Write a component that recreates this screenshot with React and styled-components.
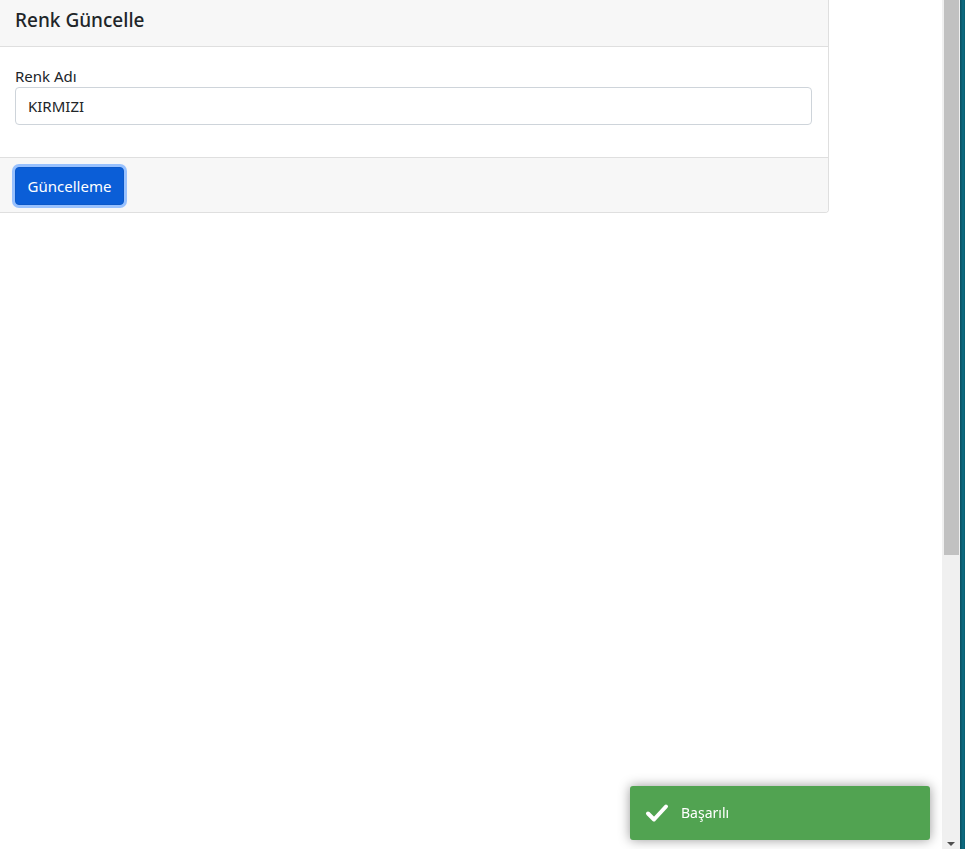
import styled, { createGlobalStyle } from "styled-components"

const GlobalStyle = createGlobalStyle`
  html, body {
    margin: 0;
    padding: 0;
    height: 100%;
    overflow: hidden;
    background: #fff;
  }
  body {
    font-family: "Noto Sans", "Open Sans", sans-serif;
    color: #212529;
  }
`

export default function App() {
  return (
    <>
      <GlobalStyle />
      <Screen>
        <Main>
          <Card>
            <CardHeader>
              <h5>Renk Güncelle</h5>
            </CardHeader>
            <CardBody>
              <Label htmlFor="renk">Renk Adı</Label>
              <Input id="renk" defaultValue="KIRMIZI" />
            </CardBody>
            <CardFooter>
              <Button>Güncelleme</Button>
            </CardFooter>
          </Card>
        </Main>
        <Scrollbar>
          <Thumb />
          <Arrow />
        </Scrollbar>
        <Edge />
      </Screen>
      <Toast>
        <svg width="24" height="20" viewBox="0 0 24 20">
          <path d="M3 10.5 L9 16.5 L21 3.5" fill="none" stroke="#fff" strokeWidth="4" strokeLinecap="round" strokeLinejoin="round" />
        </svg>
        <span>Başarılı</span>
      </Toast>
    </>
  )
}

const Screen = styled.div`
  display: flex;
  height: 849px;
  width: 965px;
`

const Main = styled.div`
  width: 942px;
  flex-shrink: 0;
`

const Card = styled.div`
  width: 829px;
  box-sizing: border-box;
  border-right: 1px solid #dfdfdf;
  border-bottom: 1px solid #dfdfdf;
  border-bottom-right-radius: 4px;
  overflow: hidden;
`

const CardHeader = styled.div`
  height: 47px;
  box-sizing: border-box;
  padding: 0 15px;
  display: flex;
  align-items: center;
  background: #f7f7f7;
  border-bottom: 1px solid #dfdfdf;

  h5 {
    margin: 0;
    margin-top: -7px;
    font-size: 19px;
    font-weight: 500;
    color: #212529;
  }
`

const CardBody = styled.div`
  padding: 19px 16px 32px 15px;
  height: 110px;
  box-sizing: border-box;
`

const Label = styled.label`
  display: block;
  font-size: 15px;
  line-height: 20px;
  margin-bottom: 1px;
  color: #212529;
`

const Input = styled.input`
  display: block;
  width: 797px;
  height: 38px;
  box-sizing: border-box;
  padding: 0 12px;
  font-family: inherit;
  font-size: 15px;
  color: #212529;
  border: 1px solid #ced4da;
  border-radius: 4px;
  outline: none;
`

const CardFooter = styled.div`
  height: 55px;
  box-sizing: border-box;
  padding: 9px 15px 0;
  background: #f7f7f7;
  border-top: 1px solid #dfdfdf;
`

const Button = styled.button`
  height: 38px;
  width: 109px;
  padding: 0;
  font-family: inherit;
  font-size: 15px;
  color: #fff;
  background: #0b5ed7;
  border: 1px solid #0a58ca;
  border-radius: 4px;
  box-shadow: 0 0 0 3px #98c1fe;
  cursor: pointer;
`

const Scrollbar = styled.div`
  width: 18px;
  flex-shrink: 0;
  background: #f0f0f0;
  position: relative;
  display: flex;
  flex-direction: column;
  align-items: center;
`

const Thumb = styled.div`
  width: 15px;
  height: 555px;
  margin-left: 1px;
  background: #c1c1c1;
`

const Arrow = styled.div`
  margin-top: auto;
  margin-bottom: 3px;
  width: 0;
  height: 0;
  border-left: 4px solid transparent;
  border-right: 4px solid transparent;
  border-top: 4px solid #505050;
`

const Edge = styled.div`
  flex: 1;
  background: linear-gradient(90deg, #0a4f60, #0e6d83 60%, #0a5d70);
`

const Toast = styled.div`
  position: fixed;
  left: 630px;
  top: 786px;
  width: 300px;
  height: 54px;
  box-sizing: border-box;
  padding: 0 15px;
  display: flex;
  align-items: center;
  gap: 12px;
  background: #51a351;
  border-radius: 3px;
  box-shadow: 0 0 12px #999;
  color: #fff;
  font-size: 14px;

  span {
    margin-top: -2px;
  }
`
